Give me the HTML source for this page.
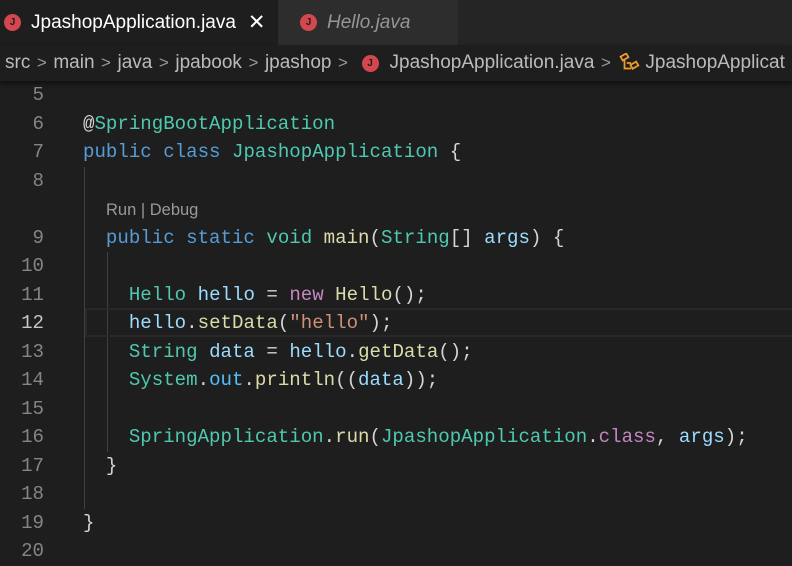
<!DOCTYPE html>
<html><head><meta charset="utf-8"><style>
*{margin:0;padding:0;box-sizing:border-box}
body{width:792px;height:546px;background:#1e1e1e;overflow:hidden;position:relative;font-family:"Liberation Sans",sans-serif}
.tabs{position:absolute;left:0;top:0;width:792px;height:45px;background:#252526}
.tab{position:absolute;top:0;height:45px;display:flex;align-items:center;font-size:19px}
.j{width:17px;height:17px;border-radius:50%;background:#d5474e;color:#1e1e1e;font-size:10px;font-weight:bold;display:flex;align-items:center;justify-content:center;margin-right:10px;flex:none}
.bc{position:absolute;left:0;top:45px;width:792px;height:36px;display:flex;align-items:center;color:#bbbbbb;font-size:19px;white-space:nowrap;box-shadow:0 3px 4px #111;overflow:hidden}
.sep{color:#999;display:inline-block;width:23px;text-align:center;font-size:17px;flex:none}
.row{position:absolute;left:0;height:28.5px;line-height:28.5px;width:792px;white-space:pre;font-family:"Liberation Mono",monospace;font-size:19.1px}
.ln{position:absolute;right:748px;color:#858585;text-align:right}
.code{position:absolute;left:83px}
.k{color:#569cd6}.t{color:#4ec9b0}.f{color:#dcdcaa}.v{color:#9cdcfe}.p{color:#d4d4d4}.n{color:#c586c0}.s{color:#ce9178}.o{color:#4fc1ff}
.guide{position:absolute;width:1px;background:#404040}
</style></head><body>
<div class="tabs">
 <div class="tab" style="left:0;width:278px;background:#1e1e1e;color:#fff;padding-left:4px"><div class="j">J</div>JpashopApplication.java<span style="margin-left:12px;font-size:21px">✕</span></div>
 <div class="tab" style="left:278px;width:180px;background:#2d2d2d;color:#969696;padding-left:22px;font-style:italic"><div class="j" style="font-style:normal;margin-right:10px">J</div>Hello.java</div>
</div>
<div class="bc"><span style="margin-left:5px">src</span><span class="sep">&gt;</span>main<span class="sep">&gt;</span>java<span class="sep">&gt;</span>jpabook<span class="sep">&gt;</span>jpashop<span class="sep">&gt;</span><div class="j" style="margin:0 11px 0 7px">J</div>JpashopApplication.java<span class="sep">&gt;</span>
<svg width="22" height="20" viewBox="0 0 20 18" style="margin:0 4px 0 2px;flex:none"><g fill="none" stroke="#ee9d28" stroke-width="1.6"><rect x="2" y="1.5" width="6" height="4" transform="rotate(-30 5 3.5)"/><rect x="11" y="9" width="6" height="4" transform="rotate(-30 14 11)"/><path d="M5 6 V14 H11 M7 9 H11"/></g></svg>JpashopApplicat</div>

<div class="guide" style="left:84px;top:167px;height:342px"></div>
<div class="guide" style="left:107px;top:252px;height:200px"></div>
<div style="position:absolute;left:85px;top:308px;width:707px;height:28.5px;border:2px solid #282828;border-right:none"></div>

<div class="row" style="top:81px"><span class="ln">5</span></div>
<div class="row" style="top:109.5px"><span class="ln">6</span><span class="code"><span class="p">@</span><span class="t">SpringBootApplication</span></span></div>
<div class="row" style="top:138px"><span class="ln">7</span><span class="code"><span class="k">public</span> <span class="k">class</span> <span class="t">JpashopApplication</span> <span class="p">{</span></span></div>
<div class="row" style="top:166.5px"><span class="ln">8</span></div>
<div class="row" style="top:196px;font-family:'Liberation Sans',sans-serif;font-size:16.5px;color:#999"><span style="position:absolute;left:106px">Run | Debug</span></div>
<div class="row" style="top:223.5px"><span class="ln">9</span><span class="code">  <span class="k">public</span> <span class="k">static</span> <span class="t">void</span> <span class="f">main</span><span class="p">(</span><span class="t">String</span><span class="p">[]</span> <span class="v">args</span><span class="p">) {</span></span></div>
<div class="row" style="top:252px"><span class="ln">10</span></div>
<div class="row" style="top:280.5px"><span class="ln">11</span><span class="code">    <span class="t">Hello</span> <span class="v">hello</span> <span class="p">=</span> <span class="n">new</span> <span class="f">Hello</span><span class="p">();</span></span></div>
<div class="row" style="top:309px"><span class="ln" style="color:#c6c6c6">12</span><span class="code">    <span class="v">hello</span><span class="p">.</span><span class="f">setData</span><span class="p">(</span><span class="s">"hello"</span><span class="p">);</span></span></div>
<div class="row" style="top:337.5px"><span class="ln">13</span><span class="code">    <span class="t">String</span> <span class="v">data</span> <span class="p">=</span> <span class="v">hello</span><span class="p">.</span><span class="f">getData</span><span class="p">();</span></span></div>
<div class="row" style="top:366px"><span class="ln">14</span><span class="code">    <span class="t">System</span><span class="p">.</span><span class="o">out</span><span class="p">.</span><span class="f">println</span><span class="p">((</span><span class="v">data</span><span class="p">));</span></span></div>
<div class="row" style="top:394.5px"><span class="ln">15</span></div>
<div class="row" style="top:423px"><span class="ln">16</span><span class="code">    <span class="t">SpringApplication</span><span class="p">.</span><span class="f">run</span><span class="p">(</span><span class="t">JpashopApplication</span><span class="p">.</span><span class="n">class</span><span class="p">,</span> <span class="v">args</span><span class="p">);</span></span></div>
<div class="row" style="top:451.5px"><span class="ln">17</span><span class="code">  <span class="p">}</span></span></div>
<div class="row" style="top:480px"><span class="ln">18</span></div>
<div class="row" style="top:508.5px"><span class="ln">19</span><span class="code"><span class="p">}</span></span></div>
<div class="row" style="top:537px"><span class="ln">20</span></div>
</body></html>
